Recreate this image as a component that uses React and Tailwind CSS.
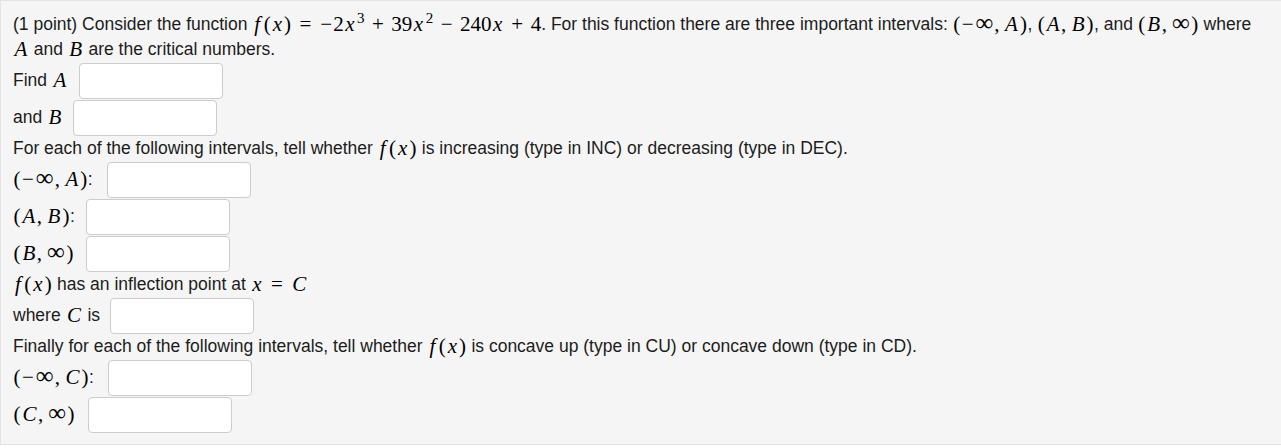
import React from "react";

const M = ({ children }) => (
  <span className="text-[21px] text-black leading-none whitespace-nowrap" style={{ fontFamily: '"Liberation Serif", serif' }}>
    {children}
  </span>
);
const I = ({ children }) => <span className="italic px-[1.5px]">{children}</span>;
const F = () => <span className="italic pl-[2px] pr-[3px]">f</span>;
const P = ({ children }) => <span className="px-[0.5px]">{children}</span>;
const Bin = ({ children }) => <span className="mx-[7.5px]">{children}</span>;
const Rel = ({ children }) => <span className="mx-[8px]">{children}</span>;
const Sup = ({ children }) => <span className="text-[15px] relative -top-[8px] pl-[1px]">{children}</span>;
const Cm = () => <span className="mr-[4px]">,</span>;
const Inf = () => <span className="px-[1px] text-[25px] leading-[0px]">∞</span>;
const Neg = () => <span className="px-[1px]">−</span>;

const Fx = () => (
  <>
    <F />
    <P>(</P>
    <I>x</I>
    <P>)</P>
  </>
);

const Box = () => (
  <input
    type="text"
    className="block h-[36px] w-[144px] shrink-0 rounded-[4px] border border-[#cccccc] bg-white outline-none"
  />
);

const Row = ({ w, children }) => (
  <div className="flex h-[37px] items-start">
    <div className={`${w} flex h-[37px] shrink-0 items-center whitespace-nowrap`}>{children}</div>
    <div className="pt-px">
      <Box />
    </div>
  </div>
);

const Line = ({ children, extra = "" }) => (
  <div className={`flex h-[25px] items-center whitespace-nowrap ${extra}`}>{children}</div>
);

export default function App() {
  return (
    <div
      className="h-[445px] w-[1290px] border border-[#e3e3e3] bg-[#f5f5f5] pl-[12px] pt-[11px] text-[17.5px] text-[#1c1c1c]"
      style={{ fontFamily: '"Liberation Sans", Arial, sans-serif' }}
    >
      <Line>
        (1 point) Consider the function&nbsp;
        <M>
          <Fx />
          <Rel>=</Rel>
          <Neg />2<I>x</I>
          <Sup>3</Sup>
          <Bin>+</Bin>39<I>x</I>
          <Sup>2</Sup>
          <Bin>−</Bin>240<I>x</I>
          <Bin>+</Bin>4
        </M>
        . For this function there are three important intervals:&nbsp;
        <M>
          <P>(</P>
          <Neg />
          <Inf />
          <Cm />
          <I>A</I>
          <P>)</P>
        </M>
        ,&nbsp;
        <M>
          <P>(</P>
          <I>A</I>
          <Cm />
          <I>B</I>
          <P>)</P>
        </M>
        , and&nbsp;
        <M>
          <P>(</P>
          <I>B</I>
          <Cm />
          <Inf />
          <P>)</P>
        </M>
        &nbsp;where
      </Line>
      <Line>
        <M>
          <I>A</I>
        </M>
        &nbsp;and&nbsp;
        <M>
          <I>B</I>
        </M>
        &nbsp;are the critical numbers.
      </Line>
      <Row w="w-[66px]">
        Find&nbsp;
        <M>
          <I>A</I>
        </M>
      </Row>
      <Row w="w-[60px]">
        and&nbsp;
        <M>
          <I>B</I>
        </M>
      </Row>
      <Line>
        For each of the following intervals, tell whether&nbsp;
        <M>
          <Fx />
        </M>
        &nbsp;is increasing (type in INC) or decreasing (type in DEC).
      </Line>
      <Row w="w-[94px]">
        <M>
          <P>(</P>
          <Neg />
          <Inf />
          <Cm />
          <I>A</I>
          <P>)</P>
        </M>
        :
      </Row>
      <Row w="w-[73px]">
        <M>
          <P>(</P>
          <I>A</I>
          <Cm />
          <I>B</I>
          <P>)</P>
        </M>
        :
      </Row>
      <Row w="w-[73px]">
        <M>
          <P>(</P>
          <I>B</I>
          <Cm />
          <Inf />
          <P>)</P>
        </M>
      </Row>
      <Line>
        <M>
          <Fx />
        </M>
        &nbsp;has an inflection point at&nbsp;
        <M>
          <I>x</I>
          <Rel>=</Rel>
          <I>C</I>
        </M>
      </Line>
      <Row w="w-[97px]">
        where&nbsp;
        <M>
          <I>C</I>
        </M>
        &nbsp;is
      </Row>
      <Line>
        Finally for each of the following intervals, tell whether&nbsp;
        <M>
          <Fx />
        </M>
        &nbsp;is concave up (type in CU) or concave down (type in CD).
      </Line>
      <Row w="w-[95px]">
        <M>
          <P>(</P>
          <Neg />
          <Inf />
          <Cm />
          <I>C</I>
          <P>)</P>
        </M>
        :
      </Row>
      <Row w="w-[75px]">
        <M>
          <P>(</P>
          <I>C</I>
          <Cm />
          <Inf />
          <P>)</P>
        </M>
      </Row>
    </div>
  );
}
